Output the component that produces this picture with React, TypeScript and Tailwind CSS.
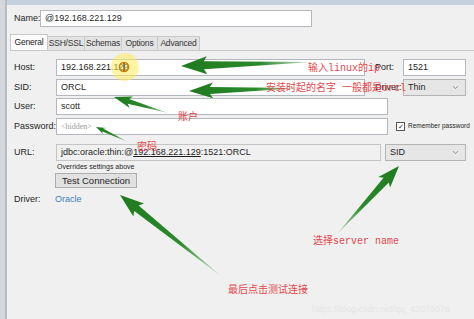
import { ChevronDown } from "lucide-react";

type Arrow = { tip: [number, number]; tail: [number, number]; head: number; headW: number; shaftW: number };

const arrows: Arrow[] = [
  { tip: [181, 66], tail: [312, 62], head: 26, headW: 18, shaftW: 8 },
  { tip: [189, 91], tail: [300, 88], head: 24, headW: 16, shaftW: 7 },
  { tip: [114, 97], tail: [168, 113], head: 18, headW: 12, shaftW: 5 },
  { tip: [96, 127], tail: [128, 142], head: 10, headW: 7, shaftW: 3 },
  { tip: [120, 195], tail: [221, 276], head: 24, headW: 17, shaftW: 7 },
  { tip: [399, 166], tail: [337, 234], head: 22, headW: 16, shaftW: 7 },
];

function arrowPoints(a: Arrow) {
  const [tx, ty] = a.tip;
  const [ex, ey] = a.tail;
  const len = Math.hypot(ex - tx, ey - ty);
  const dx = (ex - tx) / len;
  const dy = (ey - ty) / len;
  const nx = -dy;
  const ny = dx;
  const bx = tx + dx * a.head;
  const by = ty + dy * a.head;
  const sx = bx - dx * 3;
  const sy = by - dy * 3;
  const pts = [
    [tx, ty],
    [bx + (nx * a.headW) / 2, by + (ny * a.headW) / 2],
    [sx + (nx * a.shaftW) / 2, sy + (ny * a.shaftW) / 2],
    [ex, ey],
    [sx - (nx * a.shaftW) / 2, sy - (ny * a.shaftW) / 2],
    [bx - (nx * a.headW) / 2, by - (ny * a.headW) / 2],
  ];
  return pts.map((p) => p.map((v) => v.toFixed(1)).join(",")).join(" ");
}

const red = "absolute whitespace-nowrap text-[10px] leading-none text-[#e5484d] font-['Liberation_Mono','Noto_Sans_CJK_SC',monospace]";

function Input({ value, className = "" }: { value: string; className?: string }) {
  return (
    <div className={`flex h-[17px] shrink-0 items-center whitespace-nowrap border border-[#b4b7bd] bg-white px-[4px] ${className}`}>
      {value}
    </div>
  );
}

function Select({ value, className = "" }: { value: string; className?: string }) {
  return (
    <div className={`flex h-[17px] shrink-0 items-center justify-between border border-[#b4b4b4] bg-[#e6e6e6] pl-[4px] pr-[5px] ${className}`}>
      <span>{value}</span>
      <ChevronDown size={9} strokeWidth={1.5} className="text-[#555]" />
    </div>
  );
}

function Label({ text, className = "w-[42px]" }: { text: string; className?: string }) {
  return <span className={`shrink-0 whitespace-nowrap ${className}`}>{text}</span>;
}

export default function App() {
  const tabs = [
    { label: "General", w: "w-[38px]" },
    { label: "SSH/SSL", w: "w-[38px]" },
    { label: "Schemas", w: "w-[38px]" },
    { label: "Options", w: "w-[37px]" },
    { label: "Advanced", w: "w-[43px]" },
  ];

  return (
    <div className="relative flex h-[319px] w-[474px] overflow-hidden bg-[#f0f0f0] font-['Liberation_Sans',sans-serif] text-[9px] leading-none text-[#1e1e1e]">
      <div className="w-[7px] shrink-0 border-r-2 border-[#b9bdc2] bg-[#d3d7db]" />

      <div className="flex flex-1 flex-col">
        <div className="h-[5px] bg-[#c5d1dc]" />

        {/* name */}
        <div className="mt-[5px] flex items-center pl-[7px]">
          <Label text="Name:" className="w-[26px]" />
          <Input value="@192.168.221.129" className="w-[272px]" />
        </div>

        {/* tabs */}
        <div className="mt-[7px] flex items-end pl-[3px]">
          {tabs.map((t, i) => (
            <div
              key={t.label}
              className={`flex shrink-0 items-center justify-center whitespace-nowrap border border-b-0 border-[#c9c9c9] text-[8.5px] tracking-[-0.2px] ${t.w} ${
                i === 0 ? "h-[16px] bg-[#fbfbfb]" : "-ml-px h-[14px] bg-[#e3e3e3] text-[#333]"
              }`}
            >
              {t.label}
            </div>
          ))}
        </div>

        {/* panel */}
        <div className="ml-[3px] flex flex-1 flex-col border-t border-[#c9c9c9] pl-[4px] pt-[8px]">
          <div className="flex items-center">
            <Label text="Host:" />
            <Input value="192.168.221.129" className="w-[309px] border-[#5a9ee0]" />
            <Label text="Port:" className="ml-[10px] w-[28px]" />
            <Input value="1521" className="w-[63px]" />
          </div>
          <div className="mt-[3px] flex items-center">
            <Label text="SID:" />
            <Input value="ORCL" className="w-[309px]" />
            <Label text="Driver:" className="ml-[10px] w-[28px]" />
            <Select value="Thin" className="w-[63px]" />
          </div>
          <div className="mt-[2px] flex items-center">
            <Label text="User:" />
            <Input value="scott" className="w-[332px]" />
          </div>
          <div className="mt-[3px] flex items-center">
            <Label text="Password:" />
            <Input value="<hidden>" className="w-[332px] font-['Liberation_Serif',serif] text-[8px] text-[#9a9a9a]" />
            <div className="ml-[8px] flex h-[9px] w-[9px] shrink-0 items-center justify-center border border-[#555] bg-white text-[7px]">
              ✓
            </div>
            <span className="ml-[3px] whitespace-nowrap text-[6.5px]">Remember password</span>
          </div>
          <div className="mt-[9px] flex items-center">
            <Label text="URL:" />
            <div className="flex h-[17px] w-[325px] shrink-0 items-center whitespace-nowrap border border-[#c4c4c4] bg-[#f0f0f0] px-[4px]">
              jdbc:oracle:thin:@<span className="underline">192.168.221.129</span>:1521:ORCL
            </div>
            <Select value="SID" className="ml-[4px] w-[81px]" />
          </div>
          <div className="ml-[43px] mt-[2px] whitespace-nowrap text-[7px]">Overrides settings above</div>
          <div className="ml-[41px] mt-[3px] flex h-[15px] w-[82px] items-center justify-center border border-[#adadad] bg-[#e1e1e1] text-[9.5px]">
            Test Connection
          </div>
          <div className="mt-[7px] flex items-center">
            <Label text="Driver:" className="w-[41px]" />
            <span className="text-[#3a7fc1]">Oracle</span>
          </div>
        </div>
      </div>

      {/* annotations */}
      <svg className="pointer-events-none absolute inset-0" width="474" height="319">
        <defs>
          {arrows.map((a, i) => (
            <linearGradient
              key={i}
              id={`g${i}`}
              gradientUnits="userSpaceOnUse"
              x1={a.tip[0]}
              y1={a.tip[1]}
              x2={a.tail[0]}
              y2={a.tail[1]}
            >
              <stop offset="0" stopColor="#1e7a1e" />
              <stop offset="0.6" stopColor="#2b8a2b" />
              <stop offset="1" stopColor="#c9dfc9" />
            </linearGradient>
          ))}
        </defs>
        <circle cx="125" cy="67" r="14" fill="rgba(255,236,90,0.55)" />
        <circle cx="124" cy="67" r="4.5" fill="none" stroke="#cf7d00" strokeWidth="1.6" />
        <line x1="124" y1="63" x2="124" y2="71" stroke="#222" strokeWidth="1" />
        {arrows.map((a, i) => (
          <polygon key={i} points={arrowPoints(a)} fill={`url(#g${i})`} />
        ))}
      </svg>

      <span className={`${red} left-[308px] top-[64px]`}>输入linux的ip</span>
      <span className={`${red} left-[266px] top-[84px]`}>安装时起的名字 一般都是orcl</span>
      <span className={`${red} left-[178px] top-[113px]`}>账户</span>
      <span className={`${red} left-[137px] top-[143px]`}>密码</span>
      <span className={`${red} left-[313px] top-[237px]`}>选择server name</span>
      <span className={`${red} left-[228px] top-[286px]`}>最后点击测试连接</span>
      <span className="absolute left-[312px] top-[305px] whitespace-nowrap text-[9px] text-[#e6e6e6]">
        https://blog.csdn.net/qq_43079376
      </span>
    </div>
  );
}
